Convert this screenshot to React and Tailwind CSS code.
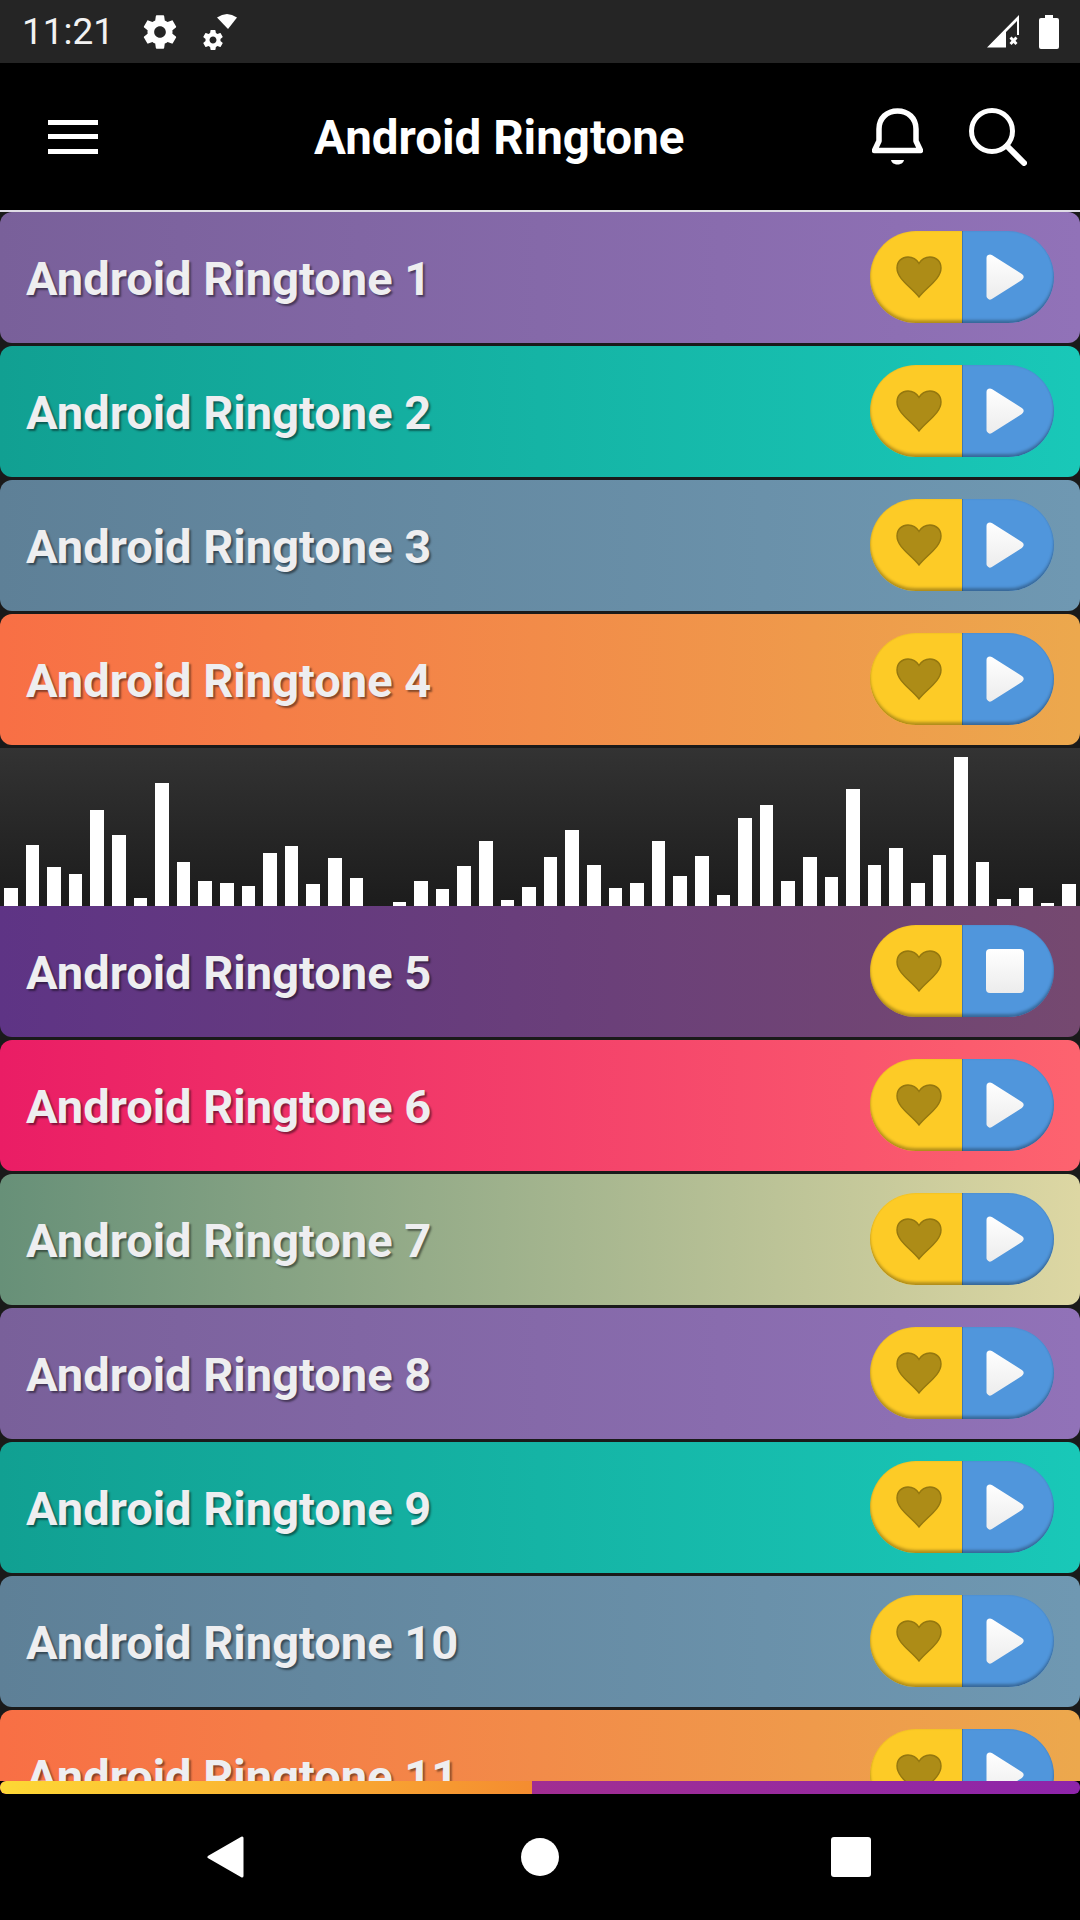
const ROWS = [
  { n: 1, bg: "bg-linear-to-r/srgb from-[#79609a] to-[#9172b8]" },
  { n: 2, bg: "bg-linear-to-r/srgb from-[#11a092] to-[#19c8b8]" },
  { n: 3, bg: "bg-linear-to-r/srgb from-[#5e8097] to-[#6f98b2]" },
  { n: 4, bg: "bg-linear-to-r/srgb from-[#f86f45] to-[#eca84d]" },
  { n: 5, bg: "bg-linear-to-r/srgb from-[#5e3485] to-[#754970]", playing: true },
  { n: 6, bg: "bg-linear-to-r/srgb from-[#ea1d65] to-[#fd636f]" },
  { n: 7, bg: "bg-linear-to-r/srgb from-[#679078] to-[#ddd7a3]" },
  { n: 8, bg: "bg-linear-to-r/srgb from-[#79609a] to-[#9172b8]" },
  { n: 9, bg: "bg-linear-to-r/srgb from-[#11a092] to-[#19c8b8]" },
  { n: 10, bg: "bg-linear-to-r/srgb from-[#5e8097] to-[#6f98b2]" },
  { n: 11, bg: "bg-linear-to-r/srgb from-[#f86f45] to-[#eca84d]" },
];

// bar heights read off the visualizer, px
const BARS = [
  18, 61, 39, 32, 96, 71, 8, 123, 44, 25, 23, 20, 53, 60, 22, 48, 28, 0, 4, 25, 17, 40, 65, 6, 19,
  49, 76, 41, 18, 23, 65, 30, 50, 11, 88, 101, 25, 49, 29, 117, 41, 58, 23, 51, 149, 44, 7, 18, 3, 22,
];

const Gear = ({ className }) => (
  <svg viewBox="0 0 24 24" className={className} fill="white">
    <path d="M19.43 12.98c.04-.32.07-.64.07-.98s-.03-.66-.07-.98l2.11-1.65c.19-.15.24-.42.12-.64l-2-3.46c-.12-.22-.39-.3-.61-.22l-2.49 1c-.52-.4-1.08-.73-1.69-.98l-.38-2.65A.488.488 0 0 0 14 2h-4c-.25 0-.46.18-.49.42l-.38 2.65c-.61.25-1.17.59-1.69.98l-2.49-1c-.23-.09-.49 0-.61.22l-2 3.46c-.13.22-.07.49.12.64l2.11 1.65c-.04.32-.07.65-.07.98s.03.66.07.98l-2.11 1.65c-.19.15-.24.42-.12.64l2 3.46c.12.22.39.3.61.22l2.49-1c.52.4 1.08.73 1.69.98l.38 2.65c.03.24.24.42.49.42h4c.25 0 .46-.18.49-.42l.38-2.65c.61-.25 1.17-.59 1.69-.98l2.49 1c.23.09.49 0 .61-.22l2-3.46c.12-.22.07-.49-.12-.64l-2.11-1.65zM12 15.5c-1.93 0-3.5-1.57-3.5-3.5s1.57-3.5 3.5-3.5 3.5 1.57 3.5 3.5-1.57 3.5-3.5 3.5z" />
  </svg>
);

const StatusBar = () => (
  <div className="flex h-[63px] items-center bg-[#252525] pl-[22px] pr-[21px]">
    <span className="font-['Roboto',sans-serif] text-[37px] leading-none text-[#f2f2f2]">11:21</span>
    <Gear className="ml-[26px] h-[40px] w-[40px]" />
    <div className="relative ml-[21px] h-[40px] w-[36px]">
      <Gear className="absolute bottom-0 left-0 h-[24px] w-[24px]" />
      <svg viewBox="0 0 20 16" className="absolute right-0 top-[1px] h-[16px] w-[20px]" fill="white">
        <path d="M0 4.5 Q10 -2.5 20 4.5 L11 16 Z" />
      </svg>
    </div>
    <svg viewBox="0 0 33 33" className="ml-auto h-[33px] w-[33px]" fill="white">
      <path d="M0 32.5 L32 0 V20 H30 V6 L19 17 V32.5 Z" />
      <path d="M22.5 23.5 L24.5 21.5 L26.5 23.5 L28.5 21.5 L30.5 23.5 L28.5 25.8 L30.5 28 L28.5 30 L26.5 28 L24.5 30 L22.5 28 L24.5 25.8 Z" />
    </svg>
    <svg viewBox="0 0 20 34" className="ml-[19px] h-[34px] w-[20px]" fill="white">
      <path d="M6 0 H14 V3 H18 Q20 3 20 5 V32 Q20 34 18 34 H2 Q0 34 0 32 V5 Q0 3 2 3 H6 Z" />
    </svg>
  </div>
);

const Toolbar = () => (
  <div className="flex h-[149px] items-center border-b-2 border-[#dfdce6] bg-black">
    <svg viewBox="0 0 50 34" className="ml-[48px] h-[34px] w-[50px]" fill="white">
      <rect y="0" width="50" height="5" />
      <rect y="14" width="50" height="5" />
      <rect y="29" width="50" height="5" />
    </svg>
    <h1 className="ml-[216px] pt-[4px] font-['Roboto',sans-serif] text-[47.5px] font-bold leading-none text-white">Android Ringtone</h1>
    <svg viewBox="0 0 51 58" className="ml-[188px] h-[58px] w-[51px]" fill="none" stroke="white" strokeWidth="5.5" strokeLinejoin="round">
      <path d="M7 33 V21 C7 10 15 3 25.5 3 C36 3 44 10 44 21 V33 L48.5 42.5 H2.5 Z" />
      <path d="M19 52 H32 C31 58 20 58 19 52 Z" fill="white" stroke="none" />
    </svg>
    <svg viewBox="0 0 58 58" className="ml-[46px] h-[58px] w-[58px]" fill="none" stroke="white" strokeLinecap="round">
      <circle cx="23" cy="23" r="20.5" strokeWidth="5" />
      <path d="M38 38 L55 55" strokeWidth="6" />
    </svg>
  </div>
);

const Visualizer = () => (
  <div className="flex h-[158px] shrink-0 items-end bg-gradient-to-b from-[#333333] to-[#1c1c1c]">
    {BARS.map((h, i) => (
      <div key={i} className="flex-1 px-[4px]">
        <div className="bg-white" style={{ height: h }} />
      </div>
    ))}
  </div>
);

const Row = ({ n, bg, playing }) => (
  <div className={`flex h-[131px] shrink-0 items-center pl-[26px] pr-[26px] ${playing ? "rounded-b-[12px]" : "rounded-[12px]"} ${bg}`}>
    <span className="pt-[1px] font-['Roboto',sans-serif] text-[47px] font-bold leading-none text-[#eeeef0] [text-shadow:2px_2px_2px_rgba(0,0,0,0.45)]">
      Android Ringtone {n}
    </span>
    <div className="relative mb-[1px] ml-auto flex h-[92px] w-[184px] overflow-hidden rounded-full">
      <div className="flex w-[92px] items-center justify-center bg-[#fdcb26] pl-[6px]">
        <svg viewBox="0 0 24 22" className="h-[44px] w-[48px]" fill="#ad8c17" stroke="#94770f" strokeWidth="0.7">
          <path d="M12 21 C8 16 1 12 1 6.5 C1 3 3.6 1 6.5 1 C8.8 1 10.8 2.2 12 4.2 C13.2 2.2 15.2 1 17.5 1 C20.4 1 23 3 23 6.5 C23 12 16 16 12 21 Z" />
        </svg>
      </div>
      <div className="flex w-[92px] items-center justify-center border-l border-[#3f78b3] bg-[#5096dc] pr-[7px]">
        {playing ? (
          <div className="h-[44px] w-[38px] rounded-[4px] bg-gradient-to-b from-white to-[#ececec]" />
        ) : (
          <svg viewBox="0 0 38 46" className="h-[46px] w-[38px]">
            <defs>
              <linearGradient id={`play${n}`} gradientUnits="userSpaceOnUse" x1="0" y1="0" x2="0" y2="46">
                <stop offset="0" stopColor="#ffffff" />
                <stop offset="1" stopColor="#ececec" />
              </linearGradient>
            </defs>
            <path d="M4 4 L34 23 L4 42 Z" fill={`url(#play${n})`} stroke={`url(#play${n})`} strokeWidth="7" strokeLinejoin="round" />
          </svg>
        )}
      </div>
      <div className="absolute inset-0 rounded-full shadow-[inset_0_-3px_3px_rgba(0,0,0,0.28),inset_0_0_2px_rgba(0,0,0,0.12)]" />
    </div>
  </div>
);

const NavBar = () => (
  <div className="flex h-[126px] items-center bg-black pb-[1px] pl-[207px]">
    <svg viewBox="0 0 37 42" className="h-[42px] w-[37px]" fill="white" stroke="white" strokeWidth="3" strokeLinejoin="round">
      <path d="M35 2 V40 L2 21 Z" />
    </svg>
    <div className="ml-[277px] h-[38px] w-[38px] rounded-full bg-white" />
    <div className="ml-[272px] h-[40px] w-[40px] rounded-[3px] bg-white" />
  </div>
);

export default function App() {
  return (
    <div className="flex h-[1920px] w-[1080px] flex-col overflow-hidden bg-black">
      <StatusBar />
      <Toolbar />
      <div className="flex flex-1 flex-col overflow-hidden bg-[#1a1a1a]">
        {ROWS.map((r) => (
          <div key={r.n} className="shrink-0 pb-[3px]">
            {r.playing && <Visualizer />}
            <Row {...r} />
          </div>
        ))}
      </div>
      <div className="flex h-[13px] shrink-0 overflow-hidden rounded-[6px] bg-gradient-to-r from-[#b52f78] to-[#8e24aa]">
        <div className="h-full w-[532px] rounded-l-[6px] bg-gradient-to-r from-[#fdd835] to-[#f48c30]" />
      </div>
      <NavBar />
    </div>
  );
}
